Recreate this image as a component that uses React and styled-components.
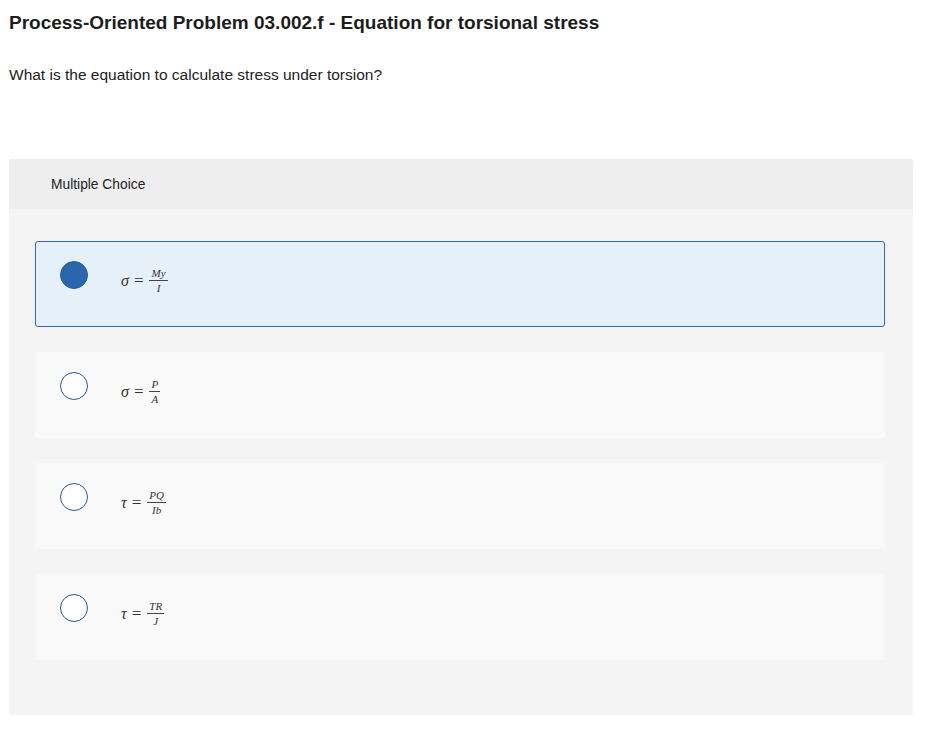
import styled, { createGlobalStyle } from "styled-components";

const GlobalStyle = createGlobalStyle`
  body {
    margin: 0;
    background: #ffffff;
    font-family: "Liberation Sans", Arial, sans-serif;
    color: #1d1d1d;
  }
`;

const Page = styled.div`
  padding: 11px 39px 0 9px;
`;

const Title = styled.h1`
  margin: 0;
  font-size: 19px;
  line-height: 24px;
  font-weight: 700;
  color: #1d1d1d;
`;

const Question = styled.p`
  margin: 30px 0 0;
  font-size: 15.5px;
  line-height: 20px;
  color: #222;
`;

const Panel = styled.section`
  margin-top: 74px;
  background: #f4f4f4;
  border-radius: 3px;
  overflow: hidden;
`;

const PanelHeader = styled.div`
  height: 50px;
  display: flex;
  align-items: center;
  padding-left: 42px;
  background: #eeeeee;
  font-size: 13.8px;
  color: #222;
`;

const Options = styled.div`
  display: flex;
  flex-direction: column;
  gap: 25px;
  padding: 32px 28px 55px 26px;
`;

const Option = styled.label`
  display: flex;
  align-items: flex-start;
  height: 86px;
  box-sizing: border-box;
  padding: 19px 0 0 24px;
  border-radius: 3px;
  border: 1px solid ${(p) => (p.$selected ? "#2c6ab0" : "transparent")};
  background: ${(p) => (p.$selected ? "#e6f0f9" : "#f9f9f9")};
  cursor: pointer;
`;

const Radio = styled.span`
  width: 28px;
  height: 28px;
  box-sizing: border-box;
  border-radius: 50%;
  flex: none;
  border: 1.5px solid #245d97;
  background: ${(p) => (p.$checked ? "#2a66ad" : "#ffffff")};
`;

const Formula = styled.span`
  display: inline-flex;
  align-items: center;
  margin: 6px 0 0 33px;
  font-family: "Liberation Serif", serif;
  font-size: 16px;
  color: #333;
`;

const Var = styled.i`
  font-style: italic;
`;

const Equals = styled.span`
  margin: 0 6px 0 5px;
  font-size: 17px;
`;

const Fraction = styled.span`
  display: inline-flex;
  flex-direction: column;
  align-items: center;
  font-family: "Liberation Serif", serif;
  font-style: italic;
  font-size: 11px;
  line-height: 12px;
`;

const Numerator = styled.span`
  padding: 0 2px 1px;
  border-bottom: 1px solid #444;
`;

const Denominator = styled.span`
  padding-top: 1px;
`;

const choices = [
  { lhs: "σ", num: "My", den: "I" },
  { lhs: "σ", num: "P", den: "A" },
  { lhs: "τ", num: "PQ", den: "Ib" },
  { lhs: "τ", num: "TR", den: "J" },
];

const App = () => {
  const selected = 0;

  return (
    <Page>
      <GlobalStyle />
      <Title>Process-Oriented Problem 03.002.f - Equation for torsional stress</Title>
      <Question>What is the equation to calculate stress under torsion?</Question>

      <Panel>
        <PanelHeader>Multiple Choice</PanelHeader>
        <Options>
          {choices.map((c, i) => (
            <Option key={i} $selected={i === selected}>
              <Radio $checked={i === selected} />
              <Formula>
                <Var>{c.lhs}</Var>
                <Equals>=</Equals>
                <Fraction>
                  <Numerator>{c.num}</Numerator>
                  <Denominator>{c.den}</Denominator>
                </Fraction>
              </Formula>
            </Option>
          ))}
        </Options>
      </Panel>
    </Page>
  );
};

export default App;
